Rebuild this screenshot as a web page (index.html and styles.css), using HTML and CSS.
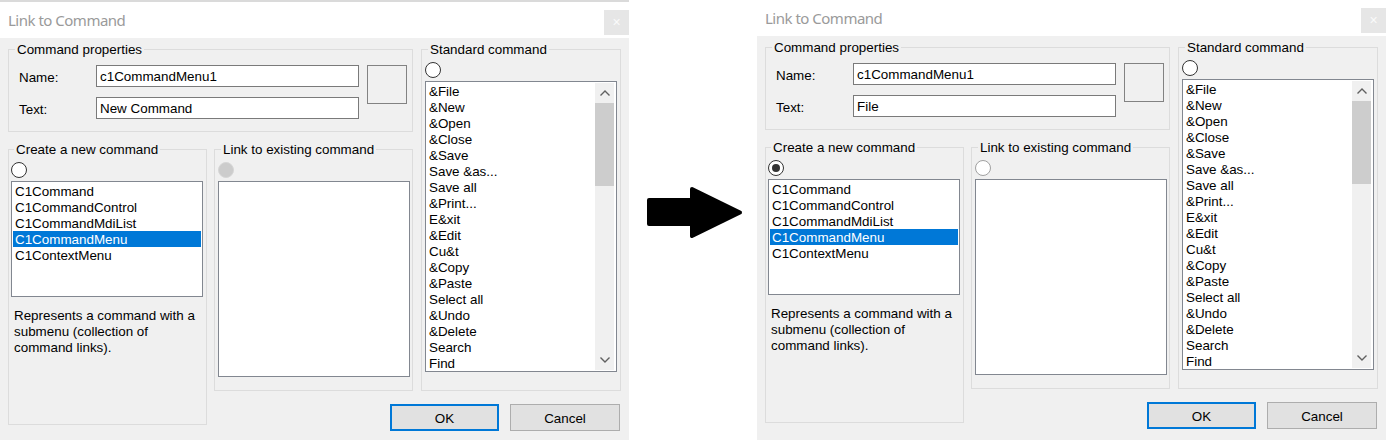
FILE: index.html
```html
<!DOCTYPE html>
<html>
<head>
<meta charset="utf-8">
<title>Link to Command</title>
<link rel="stylesheet" href="styles.css">
</head>
<body>
<div class="page">

  <div class="dialog">
    <div class="titlebar">
      <span class="title">Link to Command</span>
      <span class="close">×</span>
    </div>
    <div class="content">
      <fieldset class="group props">
        <legend>Command properties</legend>
        <div class="props-body">
          <div class="fields">
            <div class="field"><span class="flabel">Name:</span><span class="input">c1CommandMenu1</span></div>
            <div class="field"><span class="flabel">Text:</span><span class="input">New Command</span></div>
          </div>
          <div class="swatch"></div>
        </div>
      </fieldset>
      <fieldset class="group std">
        <legend>Standard command</legend>
        <span class="radio"></span>
        <div class="list scroll">
          <div class="items">
            <div class="item">&amp;File</div>
            <div class="item">&amp;New</div>
            <div class="item">&amp;Open</div>
            <div class="item">&amp;Close</div>
            <div class="item">&amp;Save</div>
            <div class="item">Save &amp;as...</div>
            <div class="item">Save all</div>
            <div class="item">&amp;Print...</div>
            <div class="item">E&amp;xit</div>
            <div class="item">&amp;Edit</div>
            <div class="item">Cu&amp;t</div>
            <div class="item">&amp;Copy</div>
            <div class="item">&amp;Paste</div>
            <div class="item">Select all</div>
            <div class="item">&amp;Undo</div>
            <div class="item">&amp;Delete</div>
            <div class="item">Search</div>
            <div class="item">Find</div>
          </div>
          <div class="scrollbar">
            <div class="sbtn"><svg width="10" height="6" viewBox="0 0 10 6"><path d="M0.5 5.5 L5 1 L9.5 5.5" fill="none" stroke="#606060" stroke-width="1.4"/></svg></div>
            <div class="thumb"></div>
            <div class="track"></div>
            <div class="sbtn"><svg width="10" height="6" viewBox="0 0 10 6"><path d="M0.5 0.5 L5 5 L9.5 0.5" fill="none" stroke="#606060" stroke-width="1.4"/></svg></div>
          </div>
        </div>
      </fieldset>
      <fieldset class="group create">
        <legend>Create a new command</legend>
        <span class="radio"></span>
        <div class="list newlist">
          <div class="item">C1Command</div>
          <div class="item">C1CommandControl</div>
          <div class="item">C1CommandMdiList</div>
          <div class="item sel">C1CommandMenu</div>
          <div class="item">C1ContextMenu</div>
        </div>
        <p class="desc">Represents a command with a<br>submenu (collection of<br>command links).</p>
      </fieldset>
      <fieldset class="group link">
        <legend>Link to existing command</legend>
        <span class="radio disabled"></span>
        <div class="list linklist"></div>
      </fieldset>
      <div class="buttons">
        <span class="btn default">OK</span>
        <span class="btn">Cancel</span>
      </div>
    </div>
  </div>

  <div class="arrow-area">
    <svg class="arrow" width="100" height="56" viewBox="0 0 100 56"><path d="M4 15 H47 V4 L95 27.5 L47 51 V39 H4 Z" fill="#000" stroke="#000" stroke-width="4" stroke-linejoin="round"/></svg>
  </div>

  <div class="dialog shifted">
    <div class="titlebar">
      <span class="title">Link to Command</span>
      <span class="close">×</span>
    </div>
    <div class="content">
      <fieldset class="group props">
        <legend>Command properties</legend>
        <div class="props-body">
          <div class="fields">
            <div class="field"><span class="flabel">Name:</span><span class="input">c1CommandMenu1</span></div>
            <div class="field"><span class="flabel">Text:</span><span class="input">File</span></div>
          </div>
          <div class="swatch"></div>
        </div>
      </fieldset>
      <fieldset class="group std">
        <legend>Standard command</legend>
        <span class="radio"></span>
        <div class="list scroll">
          <div class="items">
            <div class="item">&amp;File</div>
            <div class="item">&amp;New</div>
            <div class="item">&amp;Open</div>
            <div class="item">&amp;Close</div>
            <div class="item">&amp;Save</div>
            <div class="item">Save &amp;as...</div>
            <div class="item">Save all</div>
            <div class="item">&amp;Print...</div>
            <div class="item">E&amp;xit</div>
            <div class="item">&amp;Edit</div>
            <div class="item">Cu&amp;t</div>
            <div class="item">&amp;Copy</div>
            <div class="item">&amp;Paste</div>
            <div class="item">Select all</div>
            <div class="item">&amp;Undo</div>
            <div class="item">&amp;Delete</div>
            <div class="item">Search</div>
            <div class="item">Find</div>
          </div>
          <div class="scrollbar">
            <div class="sbtn"><svg width="10" height="6" viewBox="0 0 10 6"><path d="M0.5 5.5 L5 1 L9.5 5.5" fill="none" stroke="#606060" stroke-width="1.4"/></svg></div>
            <div class="thumb"></div>
            <div class="track"></div>
            <div class="sbtn"><svg width="10" height="6" viewBox="0 0 10 6"><path d="M0.5 0.5 L5 5 L9.5 0.5" fill="none" stroke="#606060" stroke-width="1.4"/></svg></div>
          </div>
        </div>
      </fieldset>
      <fieldset class="group create">
        <legend>Create a new command</legend>
        <span class="radio checked"></span>
        <div class="list newlist">
          <div class="item">C1Command</div>
          <div class="item">C1CommandControl</div>
          <div class="item">C1CommandMdiList</div>
          <div class="item sel">C1CommandMenu</div>
          <div class="item">C1ContextMenu</div>
        </div>
        <p class="desc">Represents a command with a<br>submenu (collection of<br>command links).</p>
      </fieldset>
      <fieldset class="group link">
        <legend>Link to existing command</legend>
        <span class="radio light"></span>
        <div class="list linklist"></div>
      </fieldset>
      <div class="buttons">
        <span class="btn default">OK</span>
        <span class="btn">Cancel</span>
      </div>
    </div>
  </div>

</div>
</body>
</html>
```

FILE: styles.css
```css
html, body {
  margin: 0;
  padding: 0;
  background: #fff;
}

body {
  font-family: "Liberation Sans", Arial, sans-serif;
  font-size: 13.4px;
  color: #000;
}

.page {
  display: flex;
  align-items: flex-start;
  width: 1390px;
  height: 440px;
  overflow: hidden;
}

.dialog {
  flex: none;
  width: 629px;
  height: 440px;
  box-sizing: border-box;
  border-top: 2px solid #dadada;
  background: #f0f0f0;
  display: flex;
  flex-direction: column;
}

.dialog.shifted {
  margin-top: -2px;
  height: 442px;
}

.titlebar {
  flex: none;
  height: 36px;
  background: #fff;
  display: flex;
  justify-content: space-between;
  align-items: flex-start;
}

.title {
  font-family: "Noto Sans", "Open Sans", sans-serif;
  font-size: 15px;
  letter-spacing: -0.5px;
  line-height: 20px;
  color: #9a9a9a;
  margin: 8px 0 0 8px;
}

.close {
  width: 25px;
  height: 25px;
  margin-top: 8px;
  background: #e6e6e6;
  color: #fafafa;
  font-size: 14px;
  line-height: 25px;
  text-align: center;
}

.content {
  display: grid;
  grid-template-columns: 199px 199px 201px;
  grid-template-rows: 91px 250px auto;
  column-gap: 7px;
  row-gap: 9px;
  padding: 3px 0 0 8px;
}

.group {
  margin: 0;
  padding: 5px 3px 0;
  border: 1px solid #dcdcdc;
  min-width: 0;
  box-sizing: border-box;
  display: flex;
  flex-direction: column;
  align-items: flex-start;
}

.group legend {
  padding: 1px 2px 0;
  margin-left: 3px;
  line-height: 15px;
}

.props {
  grid-column: 1 / 3;
  grid-row: 1;
}

.props-body {
  display: flex;
  padding: 3px 0 0 7px;
}

.fields {
  display: flex;
  flex-direction: column;
  gap: 10px;
}

.field {
  display: flex;
  align-items: center;
}

.flabel {
  width: 77px;
  padding-top: 2px;
}

.input {
  width: 263px;
  height: 22px;
  box-sizing: border-box;
  border: 1px solid #7a7a7a;
  background: #fff;
  padding-left: 3px;
  line-height: 22px;
  white-space: nowrap;
}

.swatch {
  width: 40px;
  height: 39px;
  box-sizing: border-box;
  border: 1px solid #828282;
  margin-left: 8px;
}

.std {
  grid-column: 3;
  grid-row: 1 / 3;
  margin-left: 1px;
}

.create {
  grid-column: 1;
  grid-row: 2 / 4;
  align-self: start;
  height: 284px;
  padding-left: 2px;
}

.link {
  grid-column: 2;
  grid-row: 2;
}

.radio {
  display: block;
  width: 16px;
  height: 16px;
  box-sizing: border-box;
  border: 1px solid #333;
  border-radius: 50%;
  background: #fff;
  margin-bottom: 3px;
  position: relative;
}

.radio.checked::after {
  content: "";
  position: absolute;
  left: 3px;
  top: 3px;
  width: 8px;
  height: 8px;
  border-radius: 50%;
  background: #333;
}

.radio.disabled {
  background: #cccccc;
  border-color: #d6d6d6;
}

.radio.light {
  border-color: #a0a0a0;
}

.list {
  width: 192px;
  box-sizing: border-box;
  border: 1px solid #828790;
  background: #fff;
  padding: 1px;
  overflow: hidden;
}

.newlist {
  height: 116px;
}

.linklist {
  height: 196px;
}

.scroll {
  height: 291px;
  display: flex;
}

.items {
  flex: 1;
  min-width: 0;
  overflow: hidden;
}

.item {
  line-height: 18px;
  height: 16px;
  padding-left: 2px;
  white-space: nowrap;
}

.item.sel {
  background: #0078d7;
  color: #fff;
}

.scrollbar {
  flex: none;
  width: 19px;
  margin-right: 1px;
  background: #f0f0f0;
  display: flex;
  flex-direction: column;
}

.sbtn {
  height: 20px;
  display: flex;
  align-items: center;
  justify-content: center;
}

.thumb {
  height: 83px;
  background: #cdcdcd;
}

.track {
  flex: 1;
}

.desc {
  margin: 11px 0 0;
  padding-left: 3px;
  line-height: 16px;
}

.buttons {
  grid-column: 2 / 4;
  grid-row: 3;
  display: flex;
  justify-content: flex-end;
  gap: 11px;
  margin: 4px 1px 0 0;
}

.btn {
  width: 110px;
  height: 27px;
  box-sizing: border-box;
  border: 1px solid #adadad;
  background: #e1e1e1;
  padding-top: 1px;
  display: flex;
  align-items: center;
  justify-content: center;
}

.btn.default {
  width: 109px;
  border: 2px solid #0078d7;
}

.arrow-area {
  flex: none;
  width: 128px;
  height: 440px;
}

.arrow {
  display: block;
  margin: 185px 0 0 16px;
}
```
